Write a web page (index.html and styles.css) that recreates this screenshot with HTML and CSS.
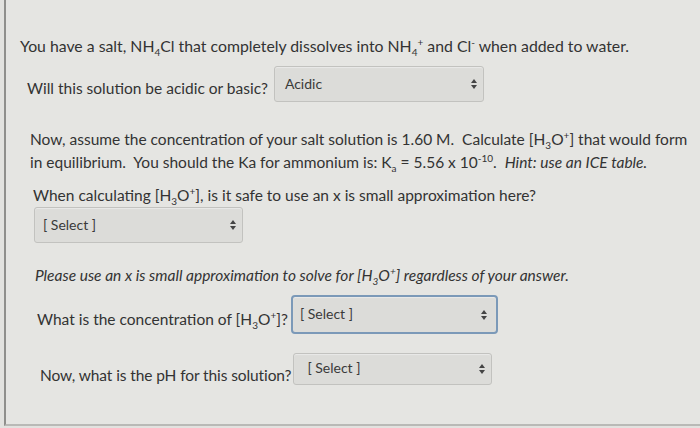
FILE: index.html
```html
<!DOCTYPE html>
<html>
<head>
<meta charset="utf-8">
<link rel="stylesheet" href="styles.css">
</head>
<body>
<div class="page">
  <p class="q q1">You have a salt, NH<sub>4</sub>Cl that completely dissolves into NH<sub>4</sub><sup>+</sup> and Cl<sup>-</sup> when added to water.</p>
  <div class="row r2">
    <span class="label">Will this solution be acidic or basic?</span>
    <div class="select s1"><span>Acidic</span><svg class="arrow" viewBox="0 0 6 10" width="6" height="10"><path d="M3 0 L6 4 L0 4 Z M3 10 L6 6 L0 6 Z" fill="#444"/></svg></div>
  </div>
  <p class="q q3">Now, assume the concentration of your salt solution is 1.60 M.&nbsp; Calculate [H<sub>3</sub>O<sup>+</sup>] that would form in equilibrium.&nbsp; You should the Ka for ammonium is: K<sub>a</sub> = 5.56 x 10<sup>-10</sup>.&nbsp; <em>Hint: use an ICE table.</em></p>
  <p class="q q4">When calculating [H<sub>3</sub>O<sup>+</sup>], is it safe to use an x is small approximation here?</p>
  <div class="select s2"><span>[ Select ]</span><svg class="arrow" viewBox="0 0 6 10" width="6" height="10"><path d="M3 0 L6 4 L0 4 Z M3 10 L6 6 L0 6 Z" fill="#444"/></svg></div>
  <p class="q q6"><em>Please use an x is small approximation to solve for [H<sub>3</sub>O<sup>+</sup>] regardless of your answer.</em></p>
  <div class="row r7">
    <span class="label">What is the concentration of [H<sub>3</sub>O<sup>+</sup>]?</span>
    <div class="select s3 focus"><span>[ Select ]</span><svg class="arrow" viewBox="0 0 6 10" width="6" height="10"><path d="M3 0 L6 4 L0 4 Z M3 10 L6 6 L0 6 Z" fill="#444"/></svg></div>
  </div>
  <div class="row r8">
    <span class="label">Now, what is the pH for this solution?</span>
    <div class="select s4"><span>[ Select ]</span><svg class="arrow" viewBox="0 0 6 10" width="6" height="10"><path d="M3 0 L6 4 L0 4 Z M3 10 L6 6 L0 6 Z" fill="#444"/></svg></div>
  </div>
</div>
</body>
</html>
```
FILE: styles.css
```css
html, body {
  margin: 0;
  padding: 0;
  background: #e2e2df;
}
body {
  width: 700px;
  height: 428px;
  overflow: hidden;
  font-family: Lato, "Open Sans", sans-serif;
  color: #333;
}
.page {
  box-sizing: border-box;
  width: 700px;
  height: 426px;
  margin-left: 4px;
  border-left: 2px solid #8f8f8c;
  border-bottom: 2px solid #b9b9b6;
  display: flex;
  flex-direction: column;
  align-items: flex-start;
  background: #e5e5e2;
}
.q {
  margin: 0;
  font-size: 15.5px;
  line-height: 22px;
}
sub, sup {
  font-size: 10px;
  line-height: 0;
}
em { font-style: italic; }
.q1 { margin-top: 35px; padding-left: 14px; font-size: 15.8px; }
.row {
  display: flex;
  align-items: center;
  font-size: 15.5px;
}
.r2 { margin-top: 9px; padding-left: 21px; }
.r2 .label { margin-right: 6px; padding-top: 8px; }
.select {
  box-sizing: border-box;
  display: flex;
  align-items: center;
  justify-content: space-between;
  background: #dcdcd9;
  border: 1px solid #c2c2bf;
  border-radius: 3px;
  box-shadow: inset 0 1px 1px rgba(255,255,255,0.4);
  font-size: 14px;
  color: #3a3a3a;
}
.select span { padding-bottom: 2px; }
.s1 { width: 210px; height: 36px; padding: 0 6px 0 10px; }
.q3 { margin-top: 26px; padding-left: 24px; width: 660px; line-height: 23px; }
.q4 { margin-top: 10px; padding-left: 27px; }
.s2 { width: 209px; height: 36px; margin-top: 1px; margin-left: 28px; padding: 0 6px 0 8px; }
.q6 { margin-top: 21px; padding-left: 29px; }
.r7 { margin-top: 9px; padding-left: 31px; }
.r7 .label { margin-right: 3px; padding-top: 9px; }
.s3 { width: 207px; height: 39px; padding: 0 9px 0 7px; border: 2.5px solid #7b99b8; border-radius: 4px; }
.r8 { margin-top: 19px; padding-left: 34px; }
.r8 .label { margin-right: 2px; padding-top: 11px; letter-spacing: -0.1px; }
.s4 { width: 199px; height: 32px; padding: 0 6px 0 13px; }
.s4 span { padding-bottom: 3px; }
```
